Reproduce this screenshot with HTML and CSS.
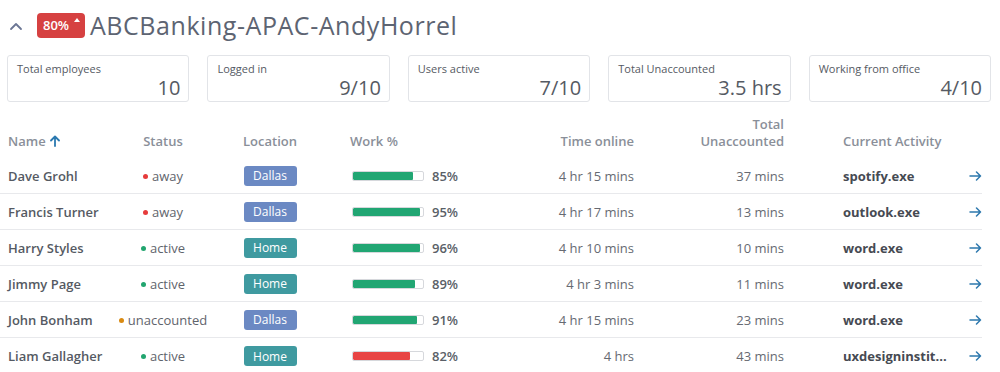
FILE: index.html
```html
<!DOCTYPE html>
<html>
<head>
<meta charset="utf-8">
<link rel="stylesheet" href="styles.css">
</head>
<body>
<div class="page">
  <div class="title-row">
    <svg class="chev" width="14" height="10" viewBox="0 0 14 10"><path d="M2 8 L7 3 L12 8" fill="none" stroke="#6b7694" stroke-width="1.8" stroke-linecap="round" stroke-linejoin="round"/></svg>
    <span class="badge">80%<span class="tri"></span></span>
    <h1 class="title">ABCBanking-APAC-AndyHorrel</h1>
  </div>

  <div class="cards">
    <div class="card"><div class="card-label">Total employees</div><div class="card-value">10</div></div>
    <div class="card"><div class="card-label">Logged in</div><div class="card-value">9/10</div></div>
    <div class="card"><div class="card-label">Users active</div><div class="card-value">7/10</div></div>
    <div class="card"><div class="card-label">Total Unaccounted</div><div class="card-value">3.5 hrs</div></div>
    <div class="card"><div class="card-label">Working from office</div><div class="card-value">4/10</div></div>
  </div>

  <div class="table">
    <div class="row head">
      <div class="c name">Name <svg class="sort" width="10" height="12" viewBox="0 0 10 12"><path d="M5 11 V1.5 M1 5.5 L5 1.5 L9 5.5" fill="none" stroke="#2b79b0" stroke-width="1.8" stroke-linecap="round" stroke-linejoin="round"/></svg></div>
      <div class="c status">Status</div>
      <div class="c loc">Location</div>
      <div class="c work">Work %</div>
      <div class="c time">Time online</div>
      <div class="c unacc">Total<br>Unaccounted</div>
      <div class="c act">Current Activity</div>
      <div class="c go"></div>
    </div>

    <div class="row">
      <div class="c name">Dave Grohl</div>
      <div class="c status"><span class="dot red"></span>away</div>
      <div class="c loc"><span class="tag dallas">Dallas</span></div>
      <div class="c work"><span class="bar"><span class="fill green" style="width:85%"></span></span><span class="pct">85%</span></div>
      <div class="c time">4 hr 15 mins</div>
      <div class="c unacc">37 mins</div>
      <div class="c act">spotify.exe</div>
      <div class="c go"><svg width="13" height="10" viewBox="0 0 13 10"><path d="M1 5 H11.5 M7.5 1 L11.5 5 L7.5 9" fill="none" stroke="#2d78ad" stroke-width="1.5" stroke-linecap="round" stroke-linejoin="round"/></svg></div>
    </div>

    <div class="row">
      <div class="c name">Francis Turner</div>
      <div class="c status"><span class="dot red"></span>away</div>
      <div class="c loc"><span class="tag dallas">Dallas</span></div>
      <div class="c work"><span class="bar"><span class="fill green" style="width:95%"></span></span><span class="pct">95%</span></div>
      <div class="c time">4 hr 17 mins</div>
      <div class="c unacc">13 mins</div>
      <div class="c act">outlook.exe</div>
      <div class="c go"><svg width="13" height="10" viewBox="0 0 13 10"><path d="M1 5 H11.5 M7.5 1 L11.5 5 L7.5 9" fill="none" stroke="#2d78ad" stroke-width="1.5" stroke-linecap="round" stroke-linejoin="round"/></svg></div>
    </div>

    <div class="row">
      <div class="c name">Harry Styles</div>
      <div class="c status"><span class="dot green"></span>active</div>
      <div class="c loc"><span class="tag home">Home</span></div>
      <div class="c work"><span class="bar"><span class="fill green" style="width:96%"></span></span><span class="pct">96%</span></div>
      <div class="c time">4 hr 10 mins</div>
      <div class="c unacc">10 mins</div>
      <div class="c act">word.exe</div>
      <div class="c go"><svg width="13" height="10" viewBox="0 0 13 10"><path d="M1 5 H11.5 M7.5 1 L11.5 5 L7.5 9" fill="none" stroke="#2d78ad" stroke-width="1.5" stroke-linecap="round" stroke-linejoin="round"/></svg></div>
    </div>

    <div class="row">
      <div class="c name">Jimmy Page</div>
      <div class="c status"><span class="dot green"></span>active</div>
      <div class="c loc"><span class="tag home">Home</span></div>
      <div class="c work"><span class="bar"><span class="fill green" style="width:89%"></span></span><span class="pct">89%</span></div>
      <div class="c time">4 hr 3 mins</div>
      <div class="c unacc">11 mins</div>
      <div class="c act">word.exe</div>
      <div class="c go"><svg width="13" height="10" viewBox="0 0 13 10"><path d="M1 5 H11.5 M7.5 1 L11.5 5 L7.5 9" fill="none" stroke="#2d78ad" stroke-width="1.5" stroke-linecap="round" stroke-linejoin="round"/></svg></div>
    </div>

    <div class="row">
      <div class="c name">John Bonham</div>
      <div class="c status"><span class="dot orange"></span>unaccounted</div>
      <div class="c loc"><span class="tag dallas">Dallas</span></div>
      <div class="c work"><span class="bar"><span class="fill green" style="width:91%"></span></span><span class="pct">91%</span></div>
      <div class="c time">4 hr 15 mins</div>
      <div class="c unacc">23 mins</div>
      <div class="c act">word.exe</div>
      <div class="c go"><svg width="13" height="10" viewBox="0 0 13 10"><path d="M1 5 H11.5 M7.5 1 L11.5 5 L7.5 9" fill="none" stroke="#2d78ad" stroke-width="1.5" stroke-linecap="round" stroke-linejoin="round"/></svg></div>
    </div>

    <div class="row">
      <div class="c name">Liam Gallagher</div>
      <div class="c status"><span class="dot green"></span>active</div>
      <div class="c loc"><span class="tag home">Home</span></div>
      <div class="c work"><span class="bar"><span class="fill red" style="width:82%"></span></span><span class="pct">82%</span></div>
      <div class="c time">4 hrs</div>
      <div class="c unacc">43 mins</div>
      <div class="c act">uxdesigninstit...</div>
      <div class="c go"><svg width="13" height="10" viewBox="0 0 13 10"><path d="M1 5 H11.5 M7.5 1 L11.5 5 L7.5 9" fill="none" stroke="#2d78ad" stroke-width="1.5" stroke-linecap="round" stroke-linejoin="round"/></svg></div>
    </div>
  </div>
</div>
</body>
</html>
```

FILE: styles.css
```css
* { box-sizing: border-box; }
html, body { margin: 0; padding: 0; background: #fff; }
body { font-family: "Open Sans", "Liberation Sans", sans-serif; color: #555a63; width: 1000px; height: 372px; overflow: hidden; }
.page { padding: 0; }

.title-row { display: flex; align-items: center; height: 52px; padding-left: 9px; padding-bottom: 2px; }
.chev { margin-top: 1px; }
.badge { position: relative; margin-left: 14px; background: #d64141; color: #fff; font-size: 13px; font-weight: 600; height: 25px; width: 48px; border-radius: 4px; display: flex; align-items: center; padding-left: 6px; }
.tri { position: absolute; right: 5px; top: 5px; width: 0; height: 0; border-left: 3px solid transparent; border-right: 3px solid transparent; border-bottom: 4px solid #fff; }
.title { margin: 0 0 0 5px; font-size: 25px; font-weight: 400; color: #5d6472; letter-spacing: 0.55px; line-height: 1; }

.cards { display: flex; gap: 18px; padding: 3px 9px 0 7px; }
.card { flex: 1; height: 47px; border: 1px solid #e2e4e8; border-radius: 3px; padding: 6px 8px 0 9px; display: flex; flex-direction: column; }
.card-label { font-size: 11px; color: #555a63; line-height: 14px; }
.card-value { font-size: 20px; color: #555a63; text-align: right; line-height: 24px; margin-top: 0px; }

.table { margin-top: 13px; width: 982px; }
.row { display: grid; grid-template-columns: 113px 100px 114px 193px 114px 152px 174px 22px; height: 36px; align-items: center; border-bottom: 1px solid #e8e9ec; font-size: 13px; }
.row.head { height: 43px; align-items: end; padding-bottom: 8px; border-bottom: none; color: #8a8f99; font-weight: 600; line-height: 17px; }
.row:last-child { border-bottom: none; }
.c { white-space: nowrap; }
.name { padding-left: 8px; font-weight: 600; color: #555a63; display: flex; align-items: center; gap: 4px; }
.head .name { color: #8a8f99; }
.sort { margin-top: -1px; }
.status { text-align: center; color: #5f646c; display: flex; justify-content: center; align-items: center; }
.head .status { color: #8a8f99; }
.dot { width: 5px; height: 5px; border-radius: 50%; display: inline-block; margin-right: 4px; margin-top: 1px; }
.dot.red { background: #e63b3b; }
.dot.green { background: #22a56f; }
.dot.orange { background: #d98a12; }
.loc { display: flex; justify-content: center; }
.tag { width: 53px; height: 20px; border-radius: 3px; color: #fff; font-size: 12px; display: flex; align-items: center; justify-content: center; }
.tag.dallas { background: #6b89c3; }
.tag.home { background: #3f9aa0; }
.work { padding-left: 23px; display: flex; align-items: center; }
.head .work { display: block; }
.bar { margin-left: 2px; width: 72px; height: 10px; border: 1px solid #d6d8dc; border-radius: 2px; display: flex; overflow: hidden; }
.fill { height: 100%; border-radius: 1px; }
.fill.green { background: #21a673; }
.fill.red { background: #e84444; }
.pct { margin-left: 8px; font-weight: 600; color: #5a5f67; }
.time { text-align: right; color: #666a72; }
.unacc { text-align: right; color: #666a72; padding-right: 2px; }
.head .time, .head .unacc { color: #8a8f99; }
.act { padding-left: 57px; font-weight: 700; color: #464a52; }
.head .act { font-weight: 600; color: #8a8f99; }
.go { display: flex; justify-content: flex-end; }
```
